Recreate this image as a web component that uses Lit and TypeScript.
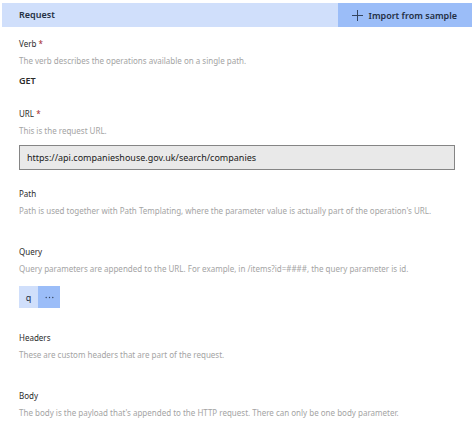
import { LitElement, html, css, nothing } from "lit";
import { customElement, property } from "lit/decorators.js";

@customElement("request-field")
class RequestField extends LitElement {
  @property() label = "";
  @property() hint = "";
  @property({ type: Boolean }) required = false;

  static styles = css`
    :host {
      display: block;
    }
    .label {
      margin: 0;
      font-size: 8px;
      font-weight: 400;
      line-height: 16px;
      color: #2b2b2b;
    }
    .star {
      color: #a4262c;
    }
    .hint {
      margin: 1px 0 0;
      font-size: 8px;
      line-height: 16px;
      color: #a4a4a4;
    }
  `;

  render() {
    return html`
      <h2 class="label">
        ${this.label}${this.required ? html` <span class="star">*</span>` : nothing}
      </h2>
      <p class="hint">${this.hint}</p>
      <slot></slot>
    `;
  }
}

@customElement("app-root")
class AppRoot extends LitElement {
  static styles = css`
    :host {
      display: block;
      padding: 3px 2px 16px;
      background: #fff;
      color: #2b2b2b;
      font-family: "Segoe UI", "Noto Sans", "Open Sans", sans-serif;
    }
    * {
      box-sizing: border-box;
    }
    button,
    input {
      font-family: inherit;
      border-radius: 0;
    }
    .bar {
      display: flex;
      justify-content: space-between;
      height: 24px;
      background: #d0dffb;
    }
    .title {
      margin: 0;
      padding-left: 17px;
      font-size: 9px;
      font-weight: 600;
      line-height: 24px;
      color: #243044;
    }
    .import {
      display: flex;
      align-items: center;
      gap: 6px;
      padding: 0 15px 0 14px;
      border: 0;
      background: #9bbdf8;
      font-size: 9px;
      font-weight: 600;
      color: #243044;
    }
    .plus {
      width: 11px;
      height: 11px;
    }
    .fields {
      padding: 9px 17px 0;
    }
    .verb {
      margin: 4px 0 17px;
      font-size: 9px;
      font-weight: 600;
      line-height: 16px;
    }
    .url {
      display: block;
      width: 100%;
      height: 25px;
      margin: 6px 0 16px;
      padding: 0 7px;
      border: 1px solid #858585;
      background: #e9e9e9;
      font-size: 9px;
      color: #1b1b1b;
    }
    .plain {
      margin-bottom: 25px;
    }
    .chip {
      display: flex;
      width: fit-content;
      height: 22px;
      margin: 9px 0 22px;
    }
    .name,
    .more {
      display: flex;
      align-items: center;
      justify-content: center;
      padding: 0;
      border: 0;
      font-size: 9px;
      color: #243044;
    }
    .name {
      width: 19px;
      background: #d0dffb;
    }
    .more {
      width: 22px;
      background: #9bbdf8;
    }
    .dots {
      width: 9px;
      height: 3px;
    }
  `;

  render() {
    return html`
      <header class="bar">
        <h1 class="title">Request</h1>
        <button class="import">
          <svg class="plus" viewBox="0 0 11 11" aria-hidden="true">
            <path d="M5.5 0V11M0 5.5H11" stroke="#34455f" stroke-width="1" />
          </svg>
          Import from sample
        </button>
      </header>
      <main class="fields">
        <request-field
          label="Verb"
          required
          hint="The verb describes the operations available on a single path."
        >
          <p class="verb">GET</p>
        </request-field>
        <request-field label="URL" required hint="This is the request URL.">
          <input
            class="url"
            type="text"
            aria-label="URL"
            readonly
            .value=${"https://api.companieshouse.gov.uk/search/companies"}
          />
        </request-field>
        <request-field
          class="plain"
          label="Path"
          hint="Path is used together with Path Templating, where the parameter value is actually part of the operation's URL."
        ></request-field>
        <request-field
          label="Query"
          hint="Query parameters are appended to the URL. For example, in /items?id=####, the query parameter is id."
        >
          <div class="chip">
            <button class="name">q</button>
            <button class="more" aria-label="More options for q">
              <svg class="dots" viewBox="0 0 9 3" fill="#34455f" aria-hidden="true">
                <circle cx="1.2" cy="1.5" r="0.7" />
                <circle cx="4.5" cy="1.5" r="0.7" />
                <circle cx="7.8" cy="1.5" r="0.7" />
              </svg>
            </button>
          </div>
        </request-field>
        <request-field
          class="plain"
          label="Headers"
          hint="These are custom headers that are part of the request."
        ></request-field>
        <request-field
          label="Body"
          hint="The body is the payload that's appended to the HTTP request. There can only be one body parameter."
        ></request-field>
      </main>
    `;
  }
}
